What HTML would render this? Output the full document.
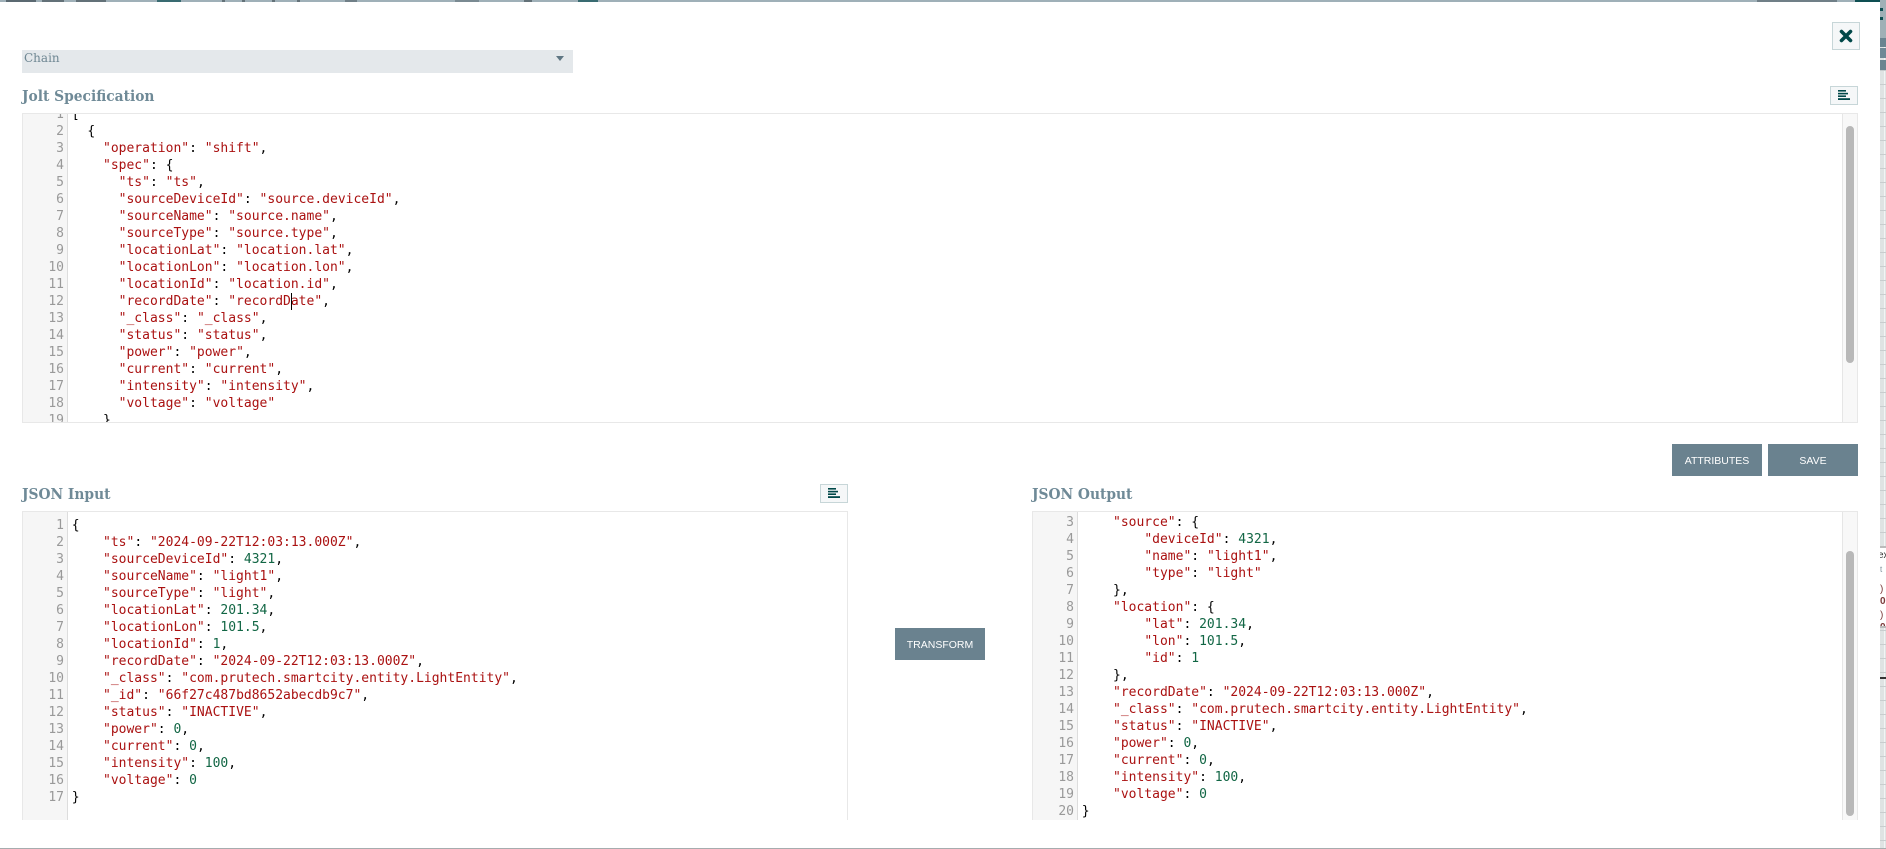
<!DOCTYPE html>
<html>
<head>
<meta charset="utf-8">
<style>
html,body{margin:0;padding:0;width:1886px;height:849px;overflow:hidden;background:#dfe3e3}
.a{position:absolute}
#bg{left:1880px;top:0;width:6px;height:849px;background-color:#dfe3e3;background-image:linear-gradient(#c8cdce 1px,transparent 1px),linear-gradient(90deg,transparent 4px,#f2f4f4 4px,#f2f4f4 5px,transparent 5px);background-size:6px 14px,6px 14px}
#modal{left:0;top:2px;width:1880px;height:846px;background:#fff}
h2{position:absolute;margin:0;font:bold 15px/20px "DejaVu Serif","Liberation Serif",serif;color:#6f8a97;transform-origin:0 50%;white-space:nowrap}
.ed{position:absolute;overflow:hidden;background:#fff;box-sizing:border-box}
.gut{position:absolute;left:0;top:0;bottom:0;width:45px;background:#f6f6f6;border-right:1px solid #ddd;box-sizing:border-box}
pre{position:absolute;margin:0;font:13px/17px "DejaVu Sans Mono","Liberation Mono",monospace;color:#000;white-space:pre}
pre.n{color:#999;text-align:right}
i{font-style:normal;color:#a11}
b{font-weight:normal;color:#164}
.track{position:absolute;width:16px;background:#f8f8f8;border-left:1px solid #e6e6e6;border-right:1px solid #ececec;box-sizing:border-box}
.thumb{position:absolute;width:8px;background:#b8b8b8;border-radius:4px}
.btn{position:absolute;width:90px;height:32px;background:#6a828f;color:#fff;font:10.500px/34px "Liberation Sans",sans-serif;text-align:center}
.ib{position:absolute;box-sizing:border-box;width:28px;height:19px;background:#f5f7f8;border:1px solid #c7d6d8}
.ib svg{position:absolute;left:7px;top:3px}
.s{position:absolute;top:0;height:2px;opacity:.7}
</style>
</head>
<body>
<div class="a" id="bg"></div>
<!-- top backdrop strip -->
<div class="a" style="left:0;top:0;width:1880px;height:2px;background:#9fb0b8"></div>
<div class="s" style="left:6px;width:30px;background:#3f4c52"></div>
<div class="s" style="left:42px;width:22px;background:#4a575d"></div>
<div class="s" style="left:76px;width:30px;background:#4a575d"></div>
<div class="s" style="left:157px;width:24px;background:#0e4f52"></div>
<div class="s" style="left:222px;width:3px;background:#4a575d"></div>
<div class="s" style="left:242px;width:3px;background:#4a575d"></div>
<div class="s" style="left:272px;width:3px;background:#4a575d"></div>
<div class="s" style="left:297px;width:3px;background:#4a575d"></div>
<div class="s" style="left:345px;width:12px;background:#5d6b72"></div>
<div class="s" style="left:455px;width:24px;background:#6b7a81"></div>
<div class="s" style="left:524px;width:8px;background:#4a575d"></div>
<div class="s" style="left:578px;width:20px;background:#0e4f52"></div>
<div class="s" style="left:1757px;width:80px;background:#5d6b72"></div>
<div class="s" style="left:1855px;width:26px;background:#0e4f52;opacity:1"></div>
<!-- right strip details -->
<div class="a" style="left:1880px;top:0;width:6px;height:38px;background:#9fb0b6"></div>
<div class="a" style="left:1880px;top:8px;width:3px;height:3px;background:#0e4f52"></div>
<div class="a" style="left:1880px;top:17px;width:3px;height:3px;background:#0e4f52"></div>
<div class="a" style="left:1880px;top:38px;width:6px;height:9px;background:#6a8490"></div>
<div class="a" style="left:1880px;top:48px;width:6px;height:10px;background:#6f8996"></div>
<div class="a" style="left:1880px;top:60px;width:6px;height:10px;background:#6a8490"></div>
<div class="a" style="left:1880px;top:546px;width:6px;height:82px;background:#fff;border-top:2px solid #bbb;border-bottom:2px solid #bbb;box-sizing:border-box;overflow:hidden;font:10px/12px 'Liberation Sans',sans-serif;color:#333"><div style="margin-left:-2px;margin-top:2px">ex</div><div style="color:#7a8f99;margin-top:2px;font-size:8px">t</div><div style="color:#7b3a3a;margin-top:8px">)</div><div style="color:#7b3a3a;font-weight:bold">0</div><div style="color:#7b3a3a;margin-top:2px">)</div><div style="color:#7b3a3a;font-weight:bold">0</div></div>
<div class="a" style="left:1880px;top:677px;width:6px;height:2px;background:#333"></div>
<div class="a" style="left:0;top:848px;width:1886px;height:1px;background:#a6acae"></div>

<div class="a" id="modal"></div>

<!-- close -->
<div class="a" style="left:1832px;top:22px;width:28px;height:28px;box-sizing:border-box;background:#f5f7f8;border:1px solid #c7d6d8">
<svg width="26" height="26" style="position:absolute;left:0;top:0"><path d="M8.500 8.500L17.500 17.500M17.500 8.500L8.500 17.500" stroke="#004849" stroke-width="3.600" stroke-linecap="round"/></svg></div>

<!-- select -->
<div class="a" style="left:22px;top:50px;width:551px;height:23px;background:#e4e8eb"></div>
<div class="a" style="left:24px;top:50px;font:12px/16px 'DejaVu Serif','Liberation Serif',serif;color:#6f8793;transform-origin:0 50%">Chain</div>
<svg class="a" style="left:556px;top:56px" width="8" height="5"><path d="M0 0H8L4 5Z" fill="#5f7683"/></svg>

<h2 style="left:22px;top:86px;transform:scaleX(.92)">Jolt Specification</h2>
<div class="ib" style="left:1830px;top:86px"><svg width="13" height="11"><rect x="0" y="0" width="8" height="1.600" fill="#004849"/><rect x="0" y="2.800" width="10" height="1.600" fill="#004849"/><rect x="0" y="5.400" width="8" height="1.600" fill="#004849"/><rect x="0" y="8.200" width="12" height="1.800" fill="#004849"/></svg></div>

<!-- Jolt editor -->
<div class="ed" style="left:22px;top:113px;width:1836px;height:310px;border:1px solid #e8e8e8">
<div class="gut"></div>
<pre class="n" style="left:0;top:-8px;width:41px">1
2
3
4
5
6
7
8
9
10
11
12
13
14
15
16
17
18
19</pre>
<pre style="left:48.700px;top:-8px">[
  {
    <i>"operation"</i>: <i>"shift"</i>,
    <i>"spec"</i>: {
      <i>"ts"</i>: <i>"ts"</i>,
      <i>"sourceDeviceId"</i>: <i>"source.deviceId"</i>,
      <i>"sourceName"</i>: <i>"source.name"</i>,
      <i>"sourceType"</i>: <i>"source.type"</i>,
      <i>"locationLat"</i>: <i>"location.lat"</i>,
      <i>"locationLon"</i>: <i>"location.lon"</i>,
      <i>"locationId"</i>: <i>"location.id"</i>,
      <i>"recordDate"</i>: <i>"recordDate"</i>,
      <i>"_class"</i>: <i>"_class"</i>,
      <i>"status"</i>: <i>"status"</i>,
      <i>"power"</i>: <i>"power"</i>,
      <i>"current"</i>: <i>"current"</i>,
      <i>"intensity"</i>: <i>"intensity"</i>,
      <i>"voltage"</i>: <i>"voltage"</i>
    }</pre>
<div class="a" style="left:268px;top:179px;width:1px;height:17px;background:#000"></div>
<div class="track" style="left:1819px;top:0;height:310px"></div>
<div class="thumb" style="left:1823px;top:12px;height:237px"></div>
</div>

<div class="btn" style="left:1672px;top:444px">ATTRIBUTES</div>
<div class="btn" style="left:1768px;top:444px">SAVE</div>

<h2 style="left:22px;top:484px;transform:scaleX(.92)">JSON Input</h2>
<div class="ib" style="left:820px;top:484px"><svg width="13" height="11"><rect x="0" y="0" width="8" height="1.600" fill="#004849"/><rect x="0" y="2.800" width="10" height="1.600" fill="#004849"/><rect x="0" y="5.400" width="8" height="1.600" fill="#004849"/><rect x="0" y="8.200" width="12" height="1.800" fill="#004849"/></svg></div>

<!-- Input editor -->
<div class="ed" style="left:22px;top:511px;width:826px;height:309px;border-top:1px solid #e8e8e8;border-left:1px solid #e8e8e8;border-right:1px solid #e8e8e8">
<div class="gut"></div>
<pre class="n" style="left:0;top:4.500px;width:41px">1
2
3
4
5
6
7
8
9
10
11
12
13
14
15
16
17</pre>
<pre style="left:48.700px;top:4.500px">{
    <i>"ts"</i>: <i>"2024-09-22T12:03:13.000Z"</i>,
    <i>"sourceDeviceId"</i>: <b>4321</b>,
    <i>"sourceName"</i>: <i>"light1"</i>,
    <i>"sourceType"</i>: <i>"light"</i>,
    <i>"locationLat"</i>: <b>201.34</b>,
    <i>"locationLon"</i>: <b>101.5</b>,
    <i>"locationId"</i>: <b>1</b>,
    <i>"recordDate"</i>: <i>"2024-09-22T12:03:13.000Z"</i>,
    <i>"_class"</i>: <i>"com.prutech.smartcity.entity.LightEntity"</i>,
    <i>"_id"</i>: <i>"66f27c487bd8652abecdb9c7"</i>,
    <i>"status"</i>: <i>"INACTIVE"</i>,
    <i>"power"</i>: <b>0</b>,
    <i>"current"</i>: <b>0</b>,
    <i>"intensity"</i>: <b>100</b>,
    <i>"voltage"</i>: <b>0</b>
}</pre>
</div>

<div class="btn" style="left:895px;top:628px">TRANSFORM</div>

<h2 style="left:1032px;top:484px;transform:scaleX(.92)">JSON Output</h2>

<!-- Output editor -->
<div class="ed" style="left:1032px;top:511px;width:826px;height:309px;border-top:1px solid #e8e8e8;border-left:1px solid #e8e8e8;border-right:1px solid #e8e8e8">
<div class="gut"></div>
<pre class="n" style="left:0;top:2px;width:41px">3
4
5
6
7
8
9
10
11
12
13
14
15
16
17
18
19
20</pre>
<pre style="left:48.700px;top:2px">    <i>"source"</i>: {
        <i>"deviceId"</i>: <b>4321</b>,
        <i>"name"</i>: <i>"light1"</i>,
        <i>"type"</i>: <i>"light"</i>
    },
    <i>"location"</i>: {
        <i>"lat"</i>: <b>201.34</b>,
        <i>"lon"</i>: <b>101.5</b>,
        <i>"id"</i>: <b>1</b>
    },
    <i>"recordDate"</i>: <i>"2024-09-22T12:03:13.000Z"</i>,
    <i>"_class"</i>: <i>"com.prutech.smartcity.entity.LightEntity"</i>,
    <i>"status"</i>: <i>"INACTIVE"</i>,
    <i>"power"</i>: <b>0</b>,
    <i>"current"</i>: <b>0</b>,
    <i>"intensity"</i>: <b>100</b>,
    <i>"voltage"</i>: <b>0</b>
}</pre>
<div class="track" style="left:809px;top:0;height:309px"></div>
<div class="thumb" style="left:813px;top:39px;height:265px"></div>
</div>
</body>
</html>
